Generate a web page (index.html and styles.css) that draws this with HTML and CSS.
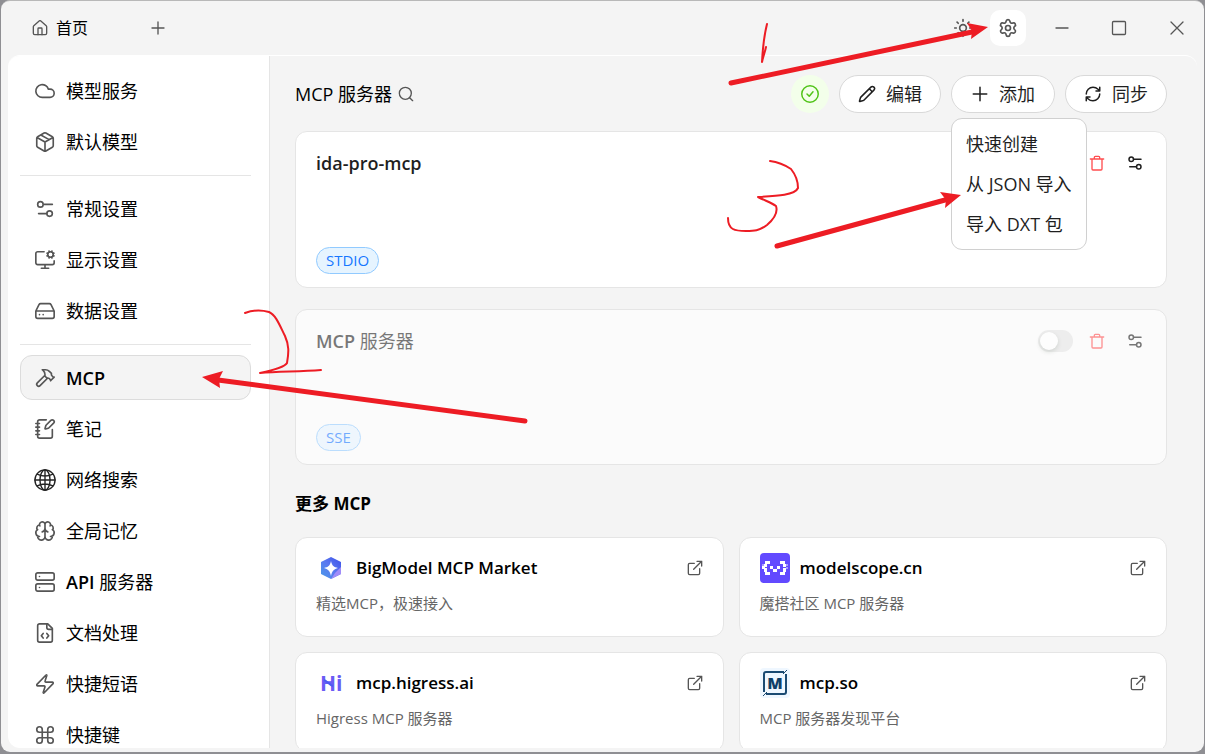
FILE: index.html
```html
<!DOCTYPE html>
<html lang="zh-CN">
<head>
    <meta charset="UTF-8">
    <meta name="viewport" content="width=device-width, initial-scale=1.0">
    <title>MCP 服务器</title>
    <link rel="stylesheet" href="styles.css">
</head>
<body>
    <!-- shared icons -->
    <svg class="sprite" aria-hidden="true">
        <symbol id="i-sliders" viewBox="0 0 24 24"><path d="M20 7h-9M14 17H5"/><circle cx="17" cy="17" r="3"/><circle cx="7" cy="7" r="3"/></symbol>
        <symbol id="i-plus" viewBox="0 0 24 24"><path d="M3 12h18M12 3v18"/></symbol>
        <symbol id="i-trash" viewBox="0 0 24 24"><path d="M2 6h20M4.500 6v15a1.500 1.500 0 0 0 1.500 1.500h12a1.500 1.500 0 0 0 1.500-1.500V6M8 6V3.500A1.500 1.500 0 0 1 9.500 2h5A1.500 1.500 0 0 1 16 3.500V6"/></symbol>
        <symbol id="i-external" viewBox="0 0 24 24"><path d="M15 2h7v7M10 14 22 2M19 13v7a2 2 0 0 1-2 2H4a2 2 0 0 1-2-2V7a2 2 0 0 1 2-2h7"/></symbol>
    </svg>

    <div class="window">
        <header class="titlebar">
            <a class="tab" href="#">
                <svg class="icon small" viewBox="0 0 24 24"><path d="M15 22v-9a1 1 0 0 0-1-1h-4a1 1 0 0 0-1 1v9"/><path d="M2 10a2 2 0 0 1 .7-1.500l8-7a2 2 0 0 1 2.600 0l8 7A2 2 0 0 1 22 10v10a2 2 0 0 1-2 2H4a2 2 0 0 1-2-2z"/></svg>
                首页
            </a>
            <button class="new-tab" aria-label="新建标签页"><svg class="icon small"><use href="#i-plus"/></svg></button>
            <div class="tools">
                <button aria-label="主题"><svg class="icon" viewBox="0 0 24 24"><circle cx="12" cy="12" r="4"/><path d="M12 2v2M12 20v2M4.900 4.900l1.400 1.400M17.700 17.700l1.400 1.400M2 12h2M20 12h2M6.300 17.700l-1.400 1.400M19.100 4.900l-1.400 1.400"/></svg></button>
                <button class="active" aria-label="设置"><svg class="icon" viewBox="0 0 24 24"><path d="M9.671 4.136a2.340 2.340 0 0 1 4.659 0 2.340 2.340 0 0 0 3.319 1.915 2.340 2.340 0 0 1 2.330 4.033 2.340 2.340 0 0 0 0 3.831 2.340 2.340 0 0 1-2.330 4.033 2.340 2.340 0 0 0-3.319 1.915 2.340 2.340 0 0 1-4.659 0 2.340 2.340 0 0 0-3.320-1.915 2.340 2.340 0 0 1-2.330-4.033 2.340 2.340 0 0 0 0-3.831A2.340 2.340 0 0 1 6.350 6.051a2.340 2.340 0 0 0 3.319-1.915"/><circle cx="12" cy="12" r="3"/></svg></button>
            </div>
            <div class="window-buttons">
                <button aria-label="最小化"><svg class="icon small" viewBox="0 0 16 16"><path d="M2 8h12"/></svg></button>
                <button aria-label="最大化"><svg class="icon small" viewBox="0 0 16 16"><rect x="1.500" y="1.500" width="13" height="13" rx="1"/></svg></button>
                <button aria-label="关闭"><svg class="icon small" viewBox="0 0 16 16"><path d="M2 2l12 12M14 2 2 14"/></svg></button>
            </div>
        </header>

        <div class="content">
            <nav class="sidebar">
                <a href="#"><svg class="icon" viewBox="0 0 24 24"><path d="M17.500 19H9a7 7 0 1 1 6.710-9h1.790a4.500 4.500 0 1 1 0 9Z"/></svg>模型服务</a>
                <a href="#"><svg class="icon" viewBox="0 0 24 24"><path d="M11 21.730a2 2 0 0 0 2 0l7-4A2 2 0 0 0 21 16V8a2 2 0 0 0-1-1.730l-7-4a2 2 0 0 0-2 0l-7 4A2 2 0 0 0 3 8v8a2 2 0 0 0 1 1.730zM12 22V12M3.300 7 12 12l8.700-5M7.500 4.270l9 5.150"/></svg>默认模型</a>
                <hr>
                <a href="#"><svg class="icon"><use href="#i-sliders"/></svg>常规设置</a>
                <a href="#"><svg class="icon" viewBox="0 0 24 24"><path d="M12 17v4M15.200 4.900l-.9-.4M15.200 7.100l-.9.4M16.900 3.200l-.4-.9M16.900 8.800l-.4.9M19.500 2.300l-.4.9M19.500 9.700l-.4-.9M21.700 4.500l-.9.4M21.700 7.500l-.9-.4M22 13v2a2 2 0 0 1-2 2H4a2 2 0 0 1-2-2V5a2 2 0 0 1 2-2h7M8 21h8"/><circle cx="18" cy="6" r="3"/></svg>显示设置</a>
                <a href="#"><svg class="icon" viewBox="0 0 24 24"><path d="M22 12H2M5.450 5.110 2 12v6a2 2 0 0 0 2 2h16a2 2 0 0 0 2-2v-6l-3.450-6.890A2 2 0 0 0 16.760 4H7.240a2 2 0 0 0-1.790 1.110zM6 16h.01M10 16h.01"/></svg>数据设置</a>
                <hr>
                <a href="#" class="active" aria-current="page"><svg class="icon" viewBox="0 0 24 24"><path d="m15 12-8.373 8.373a1 1 0 1 1-3-3L12 9M18 15l4-4M21.500 11.500l-1.914-1.914A2 2 0 0 1 19 8.172V7l-2.260-2.260a6 6 0 0 0-4.202-1.756L9 2.960l.92.82A6.180 6.180 0 0 1 12 8.400V10l2 2h1.172a2 2 0 0 1 1.414.586L18.500 14.500"/></svg>MCP</a>
                <a href="#"><svg class="icon" viewBox="0 0 24 24"><path d="M13.400 2H6a2 2 0 0 0-2 2v16a2 2 0 0 0 2 2h12a2 2 0 0 0 2-2v-7.400M2 6h4M2 10h4M2 14h4M2 18h4"/><path d="M21.378 5.626a1 1 0 1 0-3.004-3.004l-5.010 5.012a2 2 0 0 0-.506.854l-.837 2.870a.5.5 0 0 0 .62.62l2.870-.837a2 2 0 0 0 .854-.506z"/></svg>笔记</a>
                <a href="#"><svg class="icon dark" viewBox="0 0 24 24"><circle cx="12" cy="12" r="11"/><ellipse cx="12" cy="12" rx="5.500" ry="11"/><path d="M12 1v22M1 12h22M3.500 5.500c5 2.500 12 2.500 17 0M3.500 18.500c5-2.500 12-2.500 17 0"/></svg>网络搜索</a>
                <a href="#"><svg class="icon" viewBox="0 0 24 24"><path d="M12 18V5M15 13a4.170 4.170 0 0 1-3-4 4.170 4.170 0 0 1-3 4M17.598 6.500A3 3 0 1 0 12 5a3 3 0 1 0-5.598 1.500M17.997 5.125a4 4 0 0 1 2.526 5.770M18 18a4 4 0 0 0 2-7.464M19.967 17.483A4 4 0 1 1 12 18a4 4 0 1 1-7.967-.517M6 18a4 4 0 0 1-2-7.464M6.003 5.125a4 4 0 0 0-2.526 5.770"/></svg>全局记忆</a>
                <a href="#"><svg class="icon" viewBox="0 0 24 24"><rect x="2" y="2" width="20" height="8" rx="2"/><rect x="2" y="14" width="20" height="8" rx="2"/><path d="M6 6h.01M6 18h.01"/></svg><span><b>API</b> 服务器</span></a>
                <a href="#"><svg class="icon" viewBox="0 0 24 24"><path d="M10 12.500 8 15l2 2.500M14 12.500l2 2.500-2 2.500M14 2v4a2 2 0 0 0 2 2h4"/><path d="M15 2H6a2 2 0 0 0-2 2v16a2 2 0 0 0 2 2h12a2 2 0 0 0 2-2V7z"/></svg>文档处理</a>
                <a href="#"><svg class="icon" viewBox="0 0 24 24"><path d="M4 14a1 1 0 0 1-.78-1.630l9.900-10.200a.5.5 0 0 1 .86.46l-1.920 6.020A1 1 0 0 0 13 10h7a1 1 0 0 1 .78 1.630l-9.900 10.200a.5.5 0 0 1-.86-.46l1.920-6.020A1 1 0 0 0 11 14z"/></svg>快捷短语</a>
                <a href="#"><svg class="icon" viewBox="0 0 24 24"><path d="M15 6v12a3 3 0 1 0 3-3H6a3 3 0 1 0 3 3V6a3 3 0 1 0-3 3h12a3 3 0 1 0-3-3"/></svg>快捷键</a>
            </nav>

            <main class="main">
                <div class="main-header">
                    <h1>MCP 服务器</h1>
                    <button class="search" aria-label="搜索"><svg class="icon small" viewBox="0 0 24 24"><circle cx="11" cy="11" r="9"/><path d="m22 22-4.500-4.500"/></svg></button>
                    <div class="actions">
                        <button class="status" aria-label="状态"><svg class="icon" viewBox="0 0 24 24"><circle cx="12" cy="12" r="11"/><path d="m8 12 3 3 5-6"/></svg></button>
                        <button class="btn"><svg class="icon" viewBox="0 0 24 24"><path d="M21.200 6.800a1 1 0 0 0-4-4L3.800 16.200a2 2 0 0 0-.5.8L2 21.400a.5.5 0 0 0 .6.6l4.400-1.300a2 2 0 0 0 .8-.5zM15 5l4 4"/></svg>编辑</button>
                        <div class="dropdown">
                            <button class="btn" aria-expanded="true"><svg class="icon"><use href="#i-plus"/></svg>添加</button>
                            <div class="menu">
                                <button>快速创建</button>
                                <button>从 JSON 导入</button>
                                <button>导入 DXT 包</button>
                            </div>
                        </div>
                        <button class="btn"><svg class="icon" viewBox="0 0 24 24"><path d="M3 12a9 9 0 0 1 9-9 9.750 9.750 0 0 1 6.740 2.740L21 8M21 3v5h-5M21 12a9 9 0 0 1-9 9 9.750 9.750 0 0 1-6.740-2.740L3 16M8 16H3v5"/></svg>同步</button>
                    </div>
                </div>

                <div class="servers">
                    <section class="server">
                        <div class="server-top">
                            <h2>ida-pro-mcp</h2>
                            <input type="checkbox" class="switch" aria-label="启用 ida-pro-mcp" checked>
                            <button class="delete" aria-label="删除"><svg class="icon small"><use href="#i-trash"/></svg></button>
                            <button aria-label="设置"><svg class="icon"><use href="#i-sliders"/></svg></button>
                        </div>
                        <span class="tag">STDIO</span>
                    </section>
                    <section class="server disabled">
                        <div class="server-top">
                            <h2>MCP <span>服务器</span></h2>
                            <input type="checkbox" class="switch" aria-label="启用 MCP 服务器">
                            <button class="delete" aria-label="删除"><svg class="icon small"><use href="#i-trash"/></svg></button>
                            <button aria-label="设置"><svg class="icon"><use href="#i-sliders"/></svg></button>
                        </div>
                        <span class="tag">SSE</span>
                    </section>
                </div>

                <h3>更多 MCP</h3>
                <div class="markets">
                    <a class="market" href="#">
                        <div class="market-top">
                            <svg class="logo" viewBox="0 0 30 30">
                                <defs><linearGradient id="big" x1="1" y1="0" x2="0" y2="1"><stop offset="0" stop-color="#3c50e8"/><stop offset="0.500" stop-color="#5a78f0"/><stop offset="1" stop-color="#4a9be8"/></linearGradient></defs>
                                <path fill="url(#big)" d="M15 4l10 5v12l-10 5-10-5V9z"/>
                                <path fill="#a08cf8" d="M25 14v7l-10 5 4-6z"/>
                                <path fill="#fff" d="M15 8c1 5 3 6 7 7-4 1-6 3-7 8-1-5-3-7-7-8 4-1 6-2 7-7z"/>
                            </svg>
                            <strong>BigModel MCP Market</strong>
                            <svg class="icon small"><use href="#i-external"/></svg>
                        </div>
                        <p>精选MCP，极速接入</p>
                    </a>
                    <a class="market" href="#">
                        <div class="market-top">
                            <svg class="logo" viewBox="0 0 30 30">
                                <rect width="30" height="30" rx="4" fill="#624aff"/>
                                <g fill="#fff">
                                    <path d="M5 8h5v3H7v3H4v-3h1zM2 13h3v3H2zM4 15h3v4h3v3H5v-3H4zM25 8h-5v3h3v3h3v-3h-1zM26 15h-3v4h-3v3h5v-3h1z"/>
                                    <path d="M10 13h3v3h-3zM13 16h4v3h-4zM17 13h3v3h-3z"/>
                                </g>
                                <path fill="#a79aff" d="M2 11h2v2H2zM26 11h2v2h-2zM26 14h2v2h-2z"/>
                            </svg>
                            <strong>modelscope.cn</strong>
                            <svg class="icon small"><use href="#i-external"/></svg>
                        </div>
                        <p>魔搭社区 MCP 服务器</p>
                    </a>
                    <a class="market" href="#">
                        <div class="market-top">
                            <svg class="logo" viewBox="0 0 30 30">
                                <text x="4" y="23" class="logo-hi">Hi</text>
                                <path d="M8 12c3 1 5 5 9 6" fill="none" stroke="#4a5cf0" stroke-width="2"/>
                            </svg>
                            <strong>mcp.higress.ai</strong>
                            <svg class="icon small"><use href="#i-external"/></svg>
                        </div>
                        <p>Higress MCP 服务器</p>
                    </a>
                    <a class="market" href="#">
                        <div class="market-top">
                            <svg class="logo" viewBox="0 0 30 30">
                                <rect width="30" height="30" rx="4" fill="#eff7ff"/>
                                <path d="M24 4H6a2 2 0 0 0-2 2v18M6 26h18a2 2 0 0 0 2-2V6" fill="none" stroke="#1a4a72" stroke-width="2"/>
                                <path d="M23 6l4-4M3 28l4-4" stroke="#1a4a72"/>
                                <text x="15" y="21" class="logo-m">M</text>
                            </svg>
                            <strong>mcp.so</strong>
                            <svg class="icon small"><use href="#i-external"/></svg>
                        </div>
                        <p>MCP 服务器发现平台</p>
                    </a>
                </div>
            </main>
        </div>
    </div>

    <!-- red pen marks: steps 1, 2, 3 -->
    <svg class="marks" viewBox="0 0 1205 754" aria-hidden="true">
        <g class="arrow">
            <path d="M731 83 972 32M777 246l168-46M525 421 218 380"/>
        </g>
        <g class="head">
            <path d="M988 27l-21-4 5 8-1 8zM961 195l-21-3 6 8-1 8zM202 377l21-6-4 8 1 9z"/>
        </g>
        <g class="pen">
            <path d="M767 24c-2 8-4 19-5 38 1-5 3-10 4-15M245 313c8-3 17-3 24-1 7 3 11 14 16 24 4 9 4 16 2 27-2 4-13 7-27 10 18-2 39-1 61-3"/>
            <path d="M770 161c8 1 15 4 21 8 4 5 7 12 7 19-3 7-20 8-40 9 8 4 14 6 18 9 2 6-2 13-9 19-8 6-13 6-21 6-11 0-18-1-18-13"/>
        </g>
    </svg>
</body>
</html>
```

FILE: styles.css
```css
* {
    box-sizing: border-box;
}

html, body {
    height: 100%;
    margin: 0;
}

body {
    position: relative;
    padding: 0 1px 2px;
    overflow: hidden;
    background: #8f8f93;
    color: #000;
    font-family: "Open Sans", "Noto Sans CJK SC", sans-serif;
    font-size: 18px;
    line-height: 24px;
}

button {
    display: flex;
    align-items: center;
    justify-content: center;
    padding: 0;
    border: 0;
    background: none;
    color: inherit;
    font: inherit;
    cursor: pointer;
}

a {
    color: inherit;
    text-decoration: none;
}

h1, h2, h3, p {
    margin: 0;
}

.sprite {
    position: absolute;
    width: 0;
    height: 0;
}

.icon {
    width: 20px;
    height: 20px;
    flex: none;
    fill: none;
    stroke: currentColor;
    stroke-width: 2;
    stroke-linecap: round;
    stroke-linejoin: round;
}

.icon.small {
    width: 16px;
    height: 16px;
}

.window {
    display: flex;
    flex-direction: column;
    height: 100%;
    border-top: 1px solid #b8b8b8;
    border-radius: 9px;
    background: #f4f4f4;
    overflow: hidden;
}

/* title bar */
.titlebar {
    display: flex;
    align-items: center;
    flex: none;
    height: 54px;
    padding: 0 5px 0 31px;
    color: #555;
}

.tab {
    display: flex;
    align-items: center;
    gap: 8px;
    width: 110px;
    color: #000;
    font-size: 16px;
}

.titlebar .icon {
    color: #555;
}

.new-tab {
    width: 32px;
    height: 32px;
}

.tools {
    display: flex;
    gap: 9px;
    margin-left: auto;
}

.tools button {
    width: 36px;
    height: 36px;
    border-radius: 10px;
}

.tools .active {
    background: #fff;
}

.window-buttons {
    display: flex;
    margin-left: 7px;
}

.window-buttons button {
    width: 57px;
    height: 36px;
}

.window-buttons .icon {
    stroke-width: 1.3;
}

.window-buttons button:last-child {
    width: 44px;
    margin-left: 8px;
}

.content {
    display: flex;
    flex: 1;
    min-height: 0;
    margin: 0 7px 4px;
    border-top: 1px solid #fff;
    border-radius: 12px;
    overflow: hidden;
}

/* sidebar */
.sidebar {
    display: flex;
    flex-direction: column;
    flex: none;
    gap: 6px;
    width: 262px;
    padding: 12px 18px 0 12px;
    border-right: 1px solid #e5e5e5;
    background: #fff;
    overflow: hidden;
}

.sidebar a {
    display: flex;
    align-items: center;
    flex: none;
    gap: 10px;
    height: 45px;
    padding: 0 13px;
    border: 1px solid transparent;
    border-radius: 12px;
}

.sidebar .icon {
    width: 22px;
    height: 22px;
    color: #555;
    stroke-width: 1.8;
}

.sidebar .icon.dark {
    color: #222;
    stroke-width: 1.5;
}

.sidebar a.active {
    border-color: #dcdcdc;
    background: #f4f4f4;
    font-weight: 600;
}

.sidebar b {
    font-weight: 600;
}

.sidebar hr {
    flex: none;
    width: 100%;
    height: 1px;
    margin: 5px 0 4px;
    border: 0;
    background: #e5e5e5;
}

/* main column */
.main {
    flex: 1;
    min-width: 0;
    padding: 19px 30px 0 25px;
    overflow: hidden;
}

.main-header {
    display: flex;
    align-items: center;
    gap: 6px;
    margin-bottom: 18px;
}

.main-header h1 {
    font-size: 18px;
    font-weight: 400;
}

.search {
    color: #555;
}

.actions {
    display: flex;
    gap: 10px;
    margin-left: auto;
}

.status {
    width: 38px;
    height: 38px;
    border-radius: 50%;
    background: #f3ffea;
    color: #52c41a;
}

.actions .icon {
    width: 18px;
    height: 18px;
}

.btn {
    gap: 10px;
    height: 38px;
    padding: 0 18px;
    border: 1px solid #d9d9d9;
    border-radius: 19px;
    background: #fff;
    color: #1f1f1f;
}

.dropdown {
    position: relative;
}

.dropdown .btn {
    padding: 0 19px;
}

.menu {
    position: absolute;
    top: 43px;
    left: 0;
    z-index: 2;
    padding: 5px;
    border: 1px solid #d0d0d0;
    border-radius: 11px;
    background: #fff;
}

.menu button {
    justify-content: flex-start;
    width: 100%;
    height: 40px;
    padding: 0 9px;
    color: #1f1f1f;
    white-space: nowrap;
}

.servers {
    display: flex;
    flex-direction: column;
    gap: 21px;
}

.server {
    display: flex;
    flex-direction: column;
    justify-content: space-between;
    align-items: flex-start;
    min-height: 157px;
    padding: 15px 15px 13px 20px;
    border: 1px solid #e5e5e5;
    border-radius: 12px;
    background: #fff;
    color: #1f1f1f;
}

.server.disabled > * {
    opacity: 0.6;
}

.server.disabled {
    min-height: 156px;
    background: #fbfbfb;
}

.server-top {
    display: flex;
    align-items: center;
    width: 100%;
}

.server-top h2 {
    margin-right: auto;
    font-size: 18px;
    font-weight: 600;
}

.server-top h2 span {
    font-weight: 400;
}

.server-top button {
    width: 32px;
    height: 32px;
    margin-left: 6px;
}

.server-top .delete {
    margin-left: 8px;
    color: #ff4d4f;
}

.server-top button:last-child .icon {
    width: 18px;
    height: 18px;
}

.switch {
    appearance: none;
    width: 35px;
    height: 22px;
    margin: 0;
    padding: 2px;
    border-radius: 11px;
    background: #e4e4e4;
}

.switch::before {
    content: "";
    display: block;
    width: 18px;
    height: 18px;
    border-radius: 50%;
    background: #fff;
    box-shadow: 0 2px 4px rgba(0, 35, 11, 0.2);
}

.switch:checked {
    padding-left: 15px;
    background: #00b96b;
}

.tag {
    padding: 0 9px;
    border: 1px solid #91caff;
    border-radius: 14px;
    background: #e6f4ff;
    color: #1677ff;
    font-size: 15px;
    line-height: 25px;
}

h3 {
    margin: 27px 0 21px;
    font-size: 17px;
    font-weight: 700;
}

.markets {
    display: grid;
    grid-template-columns: 1fr 1fr;
    gap: 15px;
}

.market {
    height: 100px;
    padding: 15px 20px;
    border: 1px solid #e5e5e5;
    border-radius: 12px;
    background: #fff;
}

.market-top {
    display: flex;
    align-items: center;
    gap: 10px;
}

.market-top strong {
    flex: 1;
    font-size: 17px;
    font-weight: 600;
}

.market-top .icon {
    color: #555;
}

.logo {
    width: 30px;
    height: 30px;
    flex: none;
}

.logo-hi {
    fill: #6a5cf5;
    font-size: 21px;
    font-weight: 700;
}

.logo-m {
    fill: #0f3f68;
    font-size: 16px;
    font-weight: 800;
    text-anchor: middle;
}

.market p {
    margin-top: 8px;
    color: #666;
    font-size: 15px;
}

.marks {
    position: absolute;
    top: 0;
    left: 0;
    z-index: 3;
    width: 1205px;
    height: 754px;
    pointer-events: none;
}

.arrow, .pen {
    fill: none;
    stroke: #ed1c24;
    stroke-width: 5;
    stroke-linecap: round;
    stroke-linejoin: round;
}

.pen {
    stroke-width: 2;
}

.head {
    fill: #ed1c24;
}
```
